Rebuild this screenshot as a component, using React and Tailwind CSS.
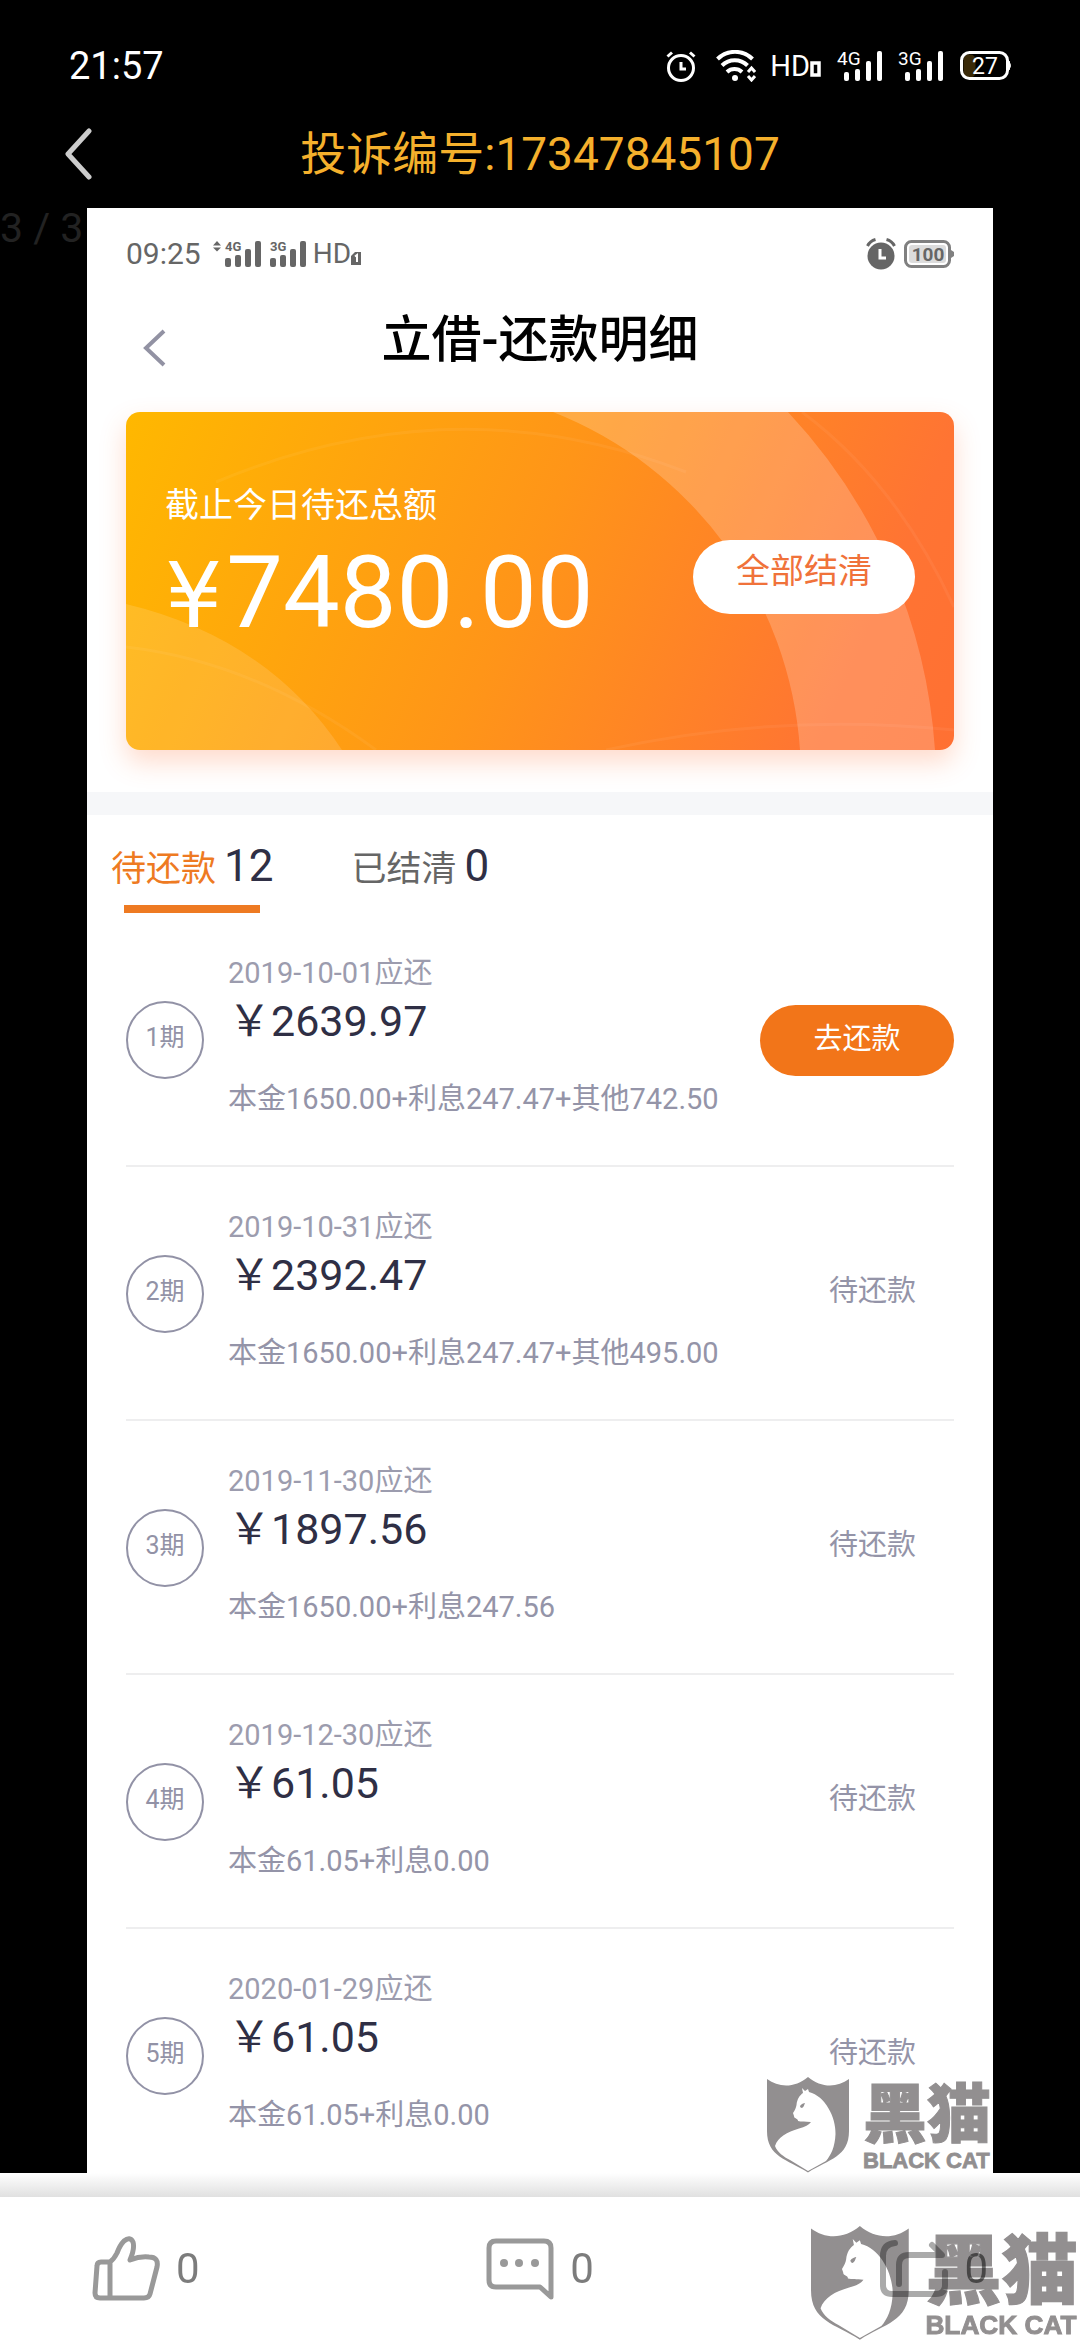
import { useState } from 'react';

const bills = [
  { id: 1, date: '2019-10-01', amount: '2639.97', detail: '本金1650.00+利息247.47+其他742.50', due: true },
  { id: 2, date: '2019-10-31', amount: '2392.47', detail: '本金1650.00+利息247.47+其他495.00' },
  { id: 3, date: '2019-11-30', amount: '1897.56', detail: '本金1650.00+利息247.56' },
  { id: 4, date: '2019-12-30', amount: '61.05', detail: '本金61.05+利息0.00' },
  { id: 5, date: '2020-01-29', amount: '61.05', detail: '本金61.05+利息0.00' },
];

const tabs = [
  { key: 'pending', label: '待还款', count: 12 },
  { key: 'settled', label: '已结清', count: 0 },
];

function Signal({ label }) {
  return (
    <svg className="overflow-visible" width="45" height="32" viewBox="0 0 45 32" fill="currentColor">
      <text x="-1" y="15" fontSize="19">{label}</text>
      <rect x="6" y="22" width="5" height="9" rx="2" />
      <rect x="17" y="19" width="5" height="12" rx="2" />
      <rect x="28" y="11" width="5" height="20" rx="2" />
      <rect x="39" y="1" width="5" height="30" rx="2" />
    </svg>
  );
}

function SignalSmall({ label }) {
  return (
    <svg className="overflow-visible" width="37" height="26" viewBox="0 0 37 26" fill="currentColor">
      <text x="0" y="10" fontSize="13" fontWeight="700">{label}</text>
      <rect x="0" y="17" width="6" height="9" rx="2" />
      <rect x="10" y="14" width="6" height="12" rx="2" />
      <rect x="20" y="8" width="6" height="18" rx="2" />
      <rect x="30" y="0" width="6" height="26" rx="2" />
    </svg>
  );
}

function StatusBar() {
  return (
    <div className="flex h-[100px] items-center justify-between pt-8 pr-[68px] pl-[69px] text-white">
      <span className="text-[38px] leading-none">21:57</span>
      <div className="flex items-center">
        <svg className="mr-5" width="30" height="32" viewBox="0 0 30 32" fill="none" stroke="currentColor" strokeWidth="3">
          <circle cx="15" cy="18" r="12.5" />
          <path d="M15 12v7h5M1.5 6.5l4.500-4M28.500 6.500l-4.500-4" />
        </svg>
        <svg className="mr-3.5" width="40" height="32" viewBox="0 0 40 32" fill="none" stroke="currentColor" strokeWidth="4">
          <path d="M1.500 9a25 25 0 0 1 35 0M6 15.500a18 18 0 0 1 25.500 0M11 22a11 11 0 0 1 15 0" />
          <circle cx="19" cy="28" r="3" fill="currentColor" stroke="none" />
          <path d="M32 22l3.500-4 3.500 4M32 26l3.500 4 3.500-4" strokeWidth="3" />
        </svg>
        <div className="mr-4 flex items-center">
          <span className="text-[29px] leading-none">HD</span>
          <svg width="12" height="24" viewBox="0 0 12 24" fill="none" stroke="currentColor" strokeWidth="3.5">
            <rect x="2" y="9" width="7" height="12" />
          </svg>
        </div>
        <div className="mr-4">
          <Signal label="4G" />
        </div>
        <div className="mr-4">
          <Signal label="3G" />
        </div>
        <svg className="overflow-visible" width="52" height="30" viewBox="0 0 52 30">
          <rect x="3.500" y="3.500" width="12" height="23" rx="5" fill="#3a2a08" />
          <rect x="1.500" y="1.500" width="46" height="26" rx="8" fill="none" stroke="currentColor" strokeWidth="3" />
          <path d="M49 10q3 4.500 0 9z" fill="currentColor" stroke="currentColor" />
          <text x="25" y="23" fontSize="23" textAnchor="middle" fill="currentColor">27</text>
        </svg>
      </div>
    </div>
  );
}

function ShotStatusBar() {
  return (
    <div className="flex h-[92px] items-center justify-between px-[39px] text-[#666]">
      <div className="flex items-center">
        <span className="mr-3 text-[30px] leading-none">09:25</span>
        <svg className="mr-1" width="8" height="26" viewBox="0 0 8 26" fill="currentColor">
          <path d="M4 0l4 4.500H0zM4 10.500L0 6.500h8z" />
        </svg>
        <div className="mr-2">
          <SignalSmall label="4G" />
        </div>
        <div className="mr-1.5">
          <SignalSmall label="3G" />
        </div>
        <span className="text-[28px] leading-none">HD</span>
        <svg width="10" height="22" viewBox="0 0 10 22">
          <path d="M4 9h6v13H0V13z" fill="currentColor" />
          <path d="M4 13.500l2-1.500v7" fill="none" stroke="#fff" strokeWidth="2" />
        </svg>
      </div>
      <div className="flex items-center gap-2">
        <svg width="30" height="32" viewBox="0 0 30 32" fill="none">
          <circle cx="15" cy="18" r="13.500" fill="currentColor" />
          <path d="M14 11v9h6" stroke="#fff" strokeWidth="3" />
          <path d="M1.500 8Q4 3 9.500 1.500M28.500 8Q26 3 20.500 1.500" stroke="currentColor" strokeWidth="3" />
        </svg>
        <svg className="overflow-visible" width="50" height="28" viewBox="0 0 50 28">
          <rect x="1.500" y="1.500" width="44" height="25" rx="6" fill="none" stroke="#808080" strokeWidth="3" />
          <rect x="5" y="5" width="37" height="18" rx="3" fill="#dcdcdc" />
          <path d="M47 10l3 2v4l-3 2z" fill="#808080" />
          <text x="24" y="21" fontSize="19" fontWeight="700" textAnchor="middle" fill="currentColor">100</text>
        </svg>
      </div>
    </div>
  );
}

function Watermark({ className }) {
  return (
    <svg className={`overflow-visible ${className}`} viewBox="0 0 224 96" fill="#928f90" aria-hidden="true">
      <path d="M0 2C12 11 28 11 41 0C54 11 70 11 82 2V54C82 80 62 82 41 95.500C20 82 0 80 0 54Z" />
      <path
        fill="#fff"
        d="M35 11L38 14L41 12L42 15C58 19 69 40 68.500 57C68 70 64 78 59 84L41 94L23 83C17 80 10 75 8 69C11 60 20 55 32 51.500C38 50 42 48 44 45C38 44.500 34 45 31 44C31 41 27 42 27 39L26 36C28 33 29 31 29.500 28C30 22 33 18 36 16Z"
      />
      <path d="M33 29c1-2 4-3 5-3-1 2-1 4-3 5-1 0-2-1-2-2z" />
      <text x="96" y="60" fontSize="64" fontWeight="900" stroke="#928f90" strokeWidth="1">黑猫</text>
      <text x="96" y="91" fontSize="22" fontWeight="700" stroke="#928f90" strokeWidth="0.8" className="font-['Liberation_Sans',sans-serif]">BLACK CAT</text>
    </svg>
  );
}

function TotalCard() {
  return (
    <section className="relative flex items-center justify-between overflow-hidden rounded-[14px] bg-[linear-gradient(113deg,#ffb800_0%,#ff9518_48%,#ff7433_86%,#ff7033_100%)] px-[39px] pt-[69px] pb-[77px] text-white">
      <svg className="absolute inset-0 h-full w-full" viewBox="0 0 828 338" preserveAspectRatio="xMaxYMid slice" fill="none">
        <path d="M427 0A392 392 0 0 1 674 338H809A548 548 0 0 0 662 0Z" fill="#fff" fillOpacity="0.2" />
        <path d="M0 192Q142 226 216 338H0Z" fill="#fff" fillOpacity="0.13" />
        <path d="M676 0Q770 70 828 195M90 70Q330 -30 560 60M0 235Q130 250 250 338M480 338Q650 300 828 318" stroke="#fff" strokeOpacity="0.05" strokeWidth="3" />
      </svg>
      <div className="relative pb-4">
        <p className="text-[34px] leading-[48px]">截止今日待还总额</p>
        <p className="flex h-[128px] items-baseline gap-1 text-[101px] leading-[128px]">
          <span className="font-['DejaVu_Sans',sans-serif] text-[90px]">¥</span>
          <span>7480.00</span>
        </p>
      </div>
      <button className="relative h-[74px] w-[222px] rounded-full bg-white pb-3 text-[34px] text-[#f0723a]">全部结清</button>
    </section>
  );
}

function BillRow({ bill }) {
  return (
    <li className="flex items-center border-b-2 border-[#eeeeef] pt-10 pb-[38px] last:border-0 last:pb-[30px]">
      <div className="flex h-[78px] w-[78px] items-center justify-center rounded-full border-2 border-[#9292a6] pb-1 text-[25px] text-[#9292a6]">
        {bill.id}期
      </div>
      <div className="ml-6 flex-1 pb-2">
        <p className="text-[29px] leading-[40px] text-[#9c9cae]">{bill.date}应还</p>
        <p className="text-[43px] leading-[56px] text-[#2f2f45]">￥{bill.amount}</p>
        <p className="mt-[30px] text-[29px] leading-[40px] text-[#9494a8]">{bill.detail}</p>
      </div>
      {bill.due ? (
        <button className="h-[71px] w-[194px] rounded-full bg-[#f27519] text-[29px] text-white">去还款</button>
      ) : (
        <span className="pr-[38px] pb-1 text-[29px] text-[#9494a8]">待还款</span>
      )}
    </li>
  );
}

export default function App() {
  const [tab, setTab] = useState('pending');

  return (
    <div className="flex min-h-screen flex-col bg-black font-['Roboto','Noto_Sans_CJK_SC',sans-serif]">
      <StatusBar />

      <header className="grid h-[108px] grid-cols-[160px_1fr_160px] items-center">
        <button aria-label="返回" className="pl-16">
          <svg width="28" height="52" viewBox="0 0 28 52" fill="none" stroke="#ccc" strokeWidth="5" strokeLinecap="round" strokeLinejoin="round">
            <path d="M25 3L4 26L25 49" />
          </svg>
        </button>
        <h1 className="text-center text-[46px] whitespace-nowrap text-[#f5b02c]">投诉编号:17347845107</h1>
      </header>

      <main className="relative flex-1 px-[87px]">
        <span className="absolute top-0 left-0 text-[41px] leading-[40px] whitespace-nowrap text-[#222]">3 / 3</span>

        {/* Attached picture */}
        <article className="relative min-h-full bg-white">
          <ShotStatusBar />
          <div className="mb-8 grid h-20 grid-cols-[160px_1fr_160px] items-center">
            <button aria-label="返回上一页" className="pt-4 pl-14">
              <svg width="24" height="38" viewBox="0 0 24 38" fill="none" stroke="#9292a3" strokeWidth="4">
                <path d="M21 2L3 19L21 36" />
              </svg>
            </button>
            <h2 className="text-center text-[50px] font-medium whitespace-nowrap text-black">立借-还款明细</h2>
          </div>

          <div className="px-[39px] pb-[42px]">
            <div className="rounded-[14px] shadow-[0_12px_26px_rgba(255,112,51,0.25)]">
              <TotalCard />
            </div>
          </div>

          <div className="h-[23px] bg-[#f6f7f9]" />

          <nav className="flex gap-[78px] px-6 pt-5">
            {tabs.map((t) => (
              <button key={t.key} onClick={() => setTab(t.key)} className="flex flex-col items-center gap-2">
                <span className={`flex h-[62px] items-baseline gap-2 text-[35px] leading-[62px] ${t.key === 'pending' ? 'text-[#ee7a22]' : 'text-[#666]'}`}>
                  {t.label}
                  <span className="text-[44px] text-[#2f2f45]">{t.count}</span>
                </span>
                <span className={`h-2 w-[136px] ${tab === t.key ? 'bg-[#ee7a22]' : ''}`} />
              </button>
            ))}
          </nav>

          <ul className="px-[39px]">
            {tab === 'pending' && bills.map((bill) => <BillRow key={bill.id} bill={bill} />)}
          </ul>

          <Watermark className="absolute right-0.5 bottom-0 w-[224px]" />
        </article>
      </main>

      <div className="h-6 bg-linear-to-b from-white to-[#e0e0e0]" />

      <footer className="relative isolate flex h-[143px] items-center justify-between bg-white px-[92px] text-[42px] text-[#7c7c7c]">
        <Watermark className="absolute right-0.5 bottom-0 w-[267px]" />
        <button aria-label="点赞" className="flex items-center gap-4">
          <svg width="68" height="66" viewBox="0 0 68 66" fill="none" stroke="#999" strokeWidth="5" strokeLinejoin="round">
            <path d="M18 26H9Q5 26 5 30L3 57Q3 62 8 62H52Q57 62 58 58L65 31Q67 21 57 21Q48 20 38 24Q43 12 41 6Q38 0 32 5Q28 9 25 17Q22 23 18 26V62" />
          </svg>
          <span>0</span>
        </button>
        <button aria-label="评论" className="flex items-center gap-4">
          <svg width="68" height="64" viewBox="0 0 68 64" fill="none" stroke="#999" strokeWidth="5" strokeLinejoin="round">
            <path d="M10 4H58Q65 4 65 11V60L54 50H10Q3 50 3 43V11Q3 4 10 4Z" />
            <g fill="#999" stroke="none">
              <circle cx="18" cy="26" r="4" />
              <circle cx="33" cy="26" r="4" />
              <circle cx="49" cy="26" r="4" />
            </g>
          </svg>
          <span>0</span>
        </button>
        <button aria-label="分享" className="flex items-center gap-4 mix-blend-multiply">
          <svg width="68" height="60" viewBox="0 0 68 60" fill="none" stroke="#aaa" strokeWidth="6" strokeLinecap="round" strokeLinejoin="round">
            <path d="M15 4Q3 5 3 17V46Q3 55 12 55H56Q65 55 65 46V33" />
            <path d="M19 45V26Q19 16 29 16H62L52 6" />
          </svg>
          <span>0</span>
        </button>
      </footer>
    </div>
  );
}
